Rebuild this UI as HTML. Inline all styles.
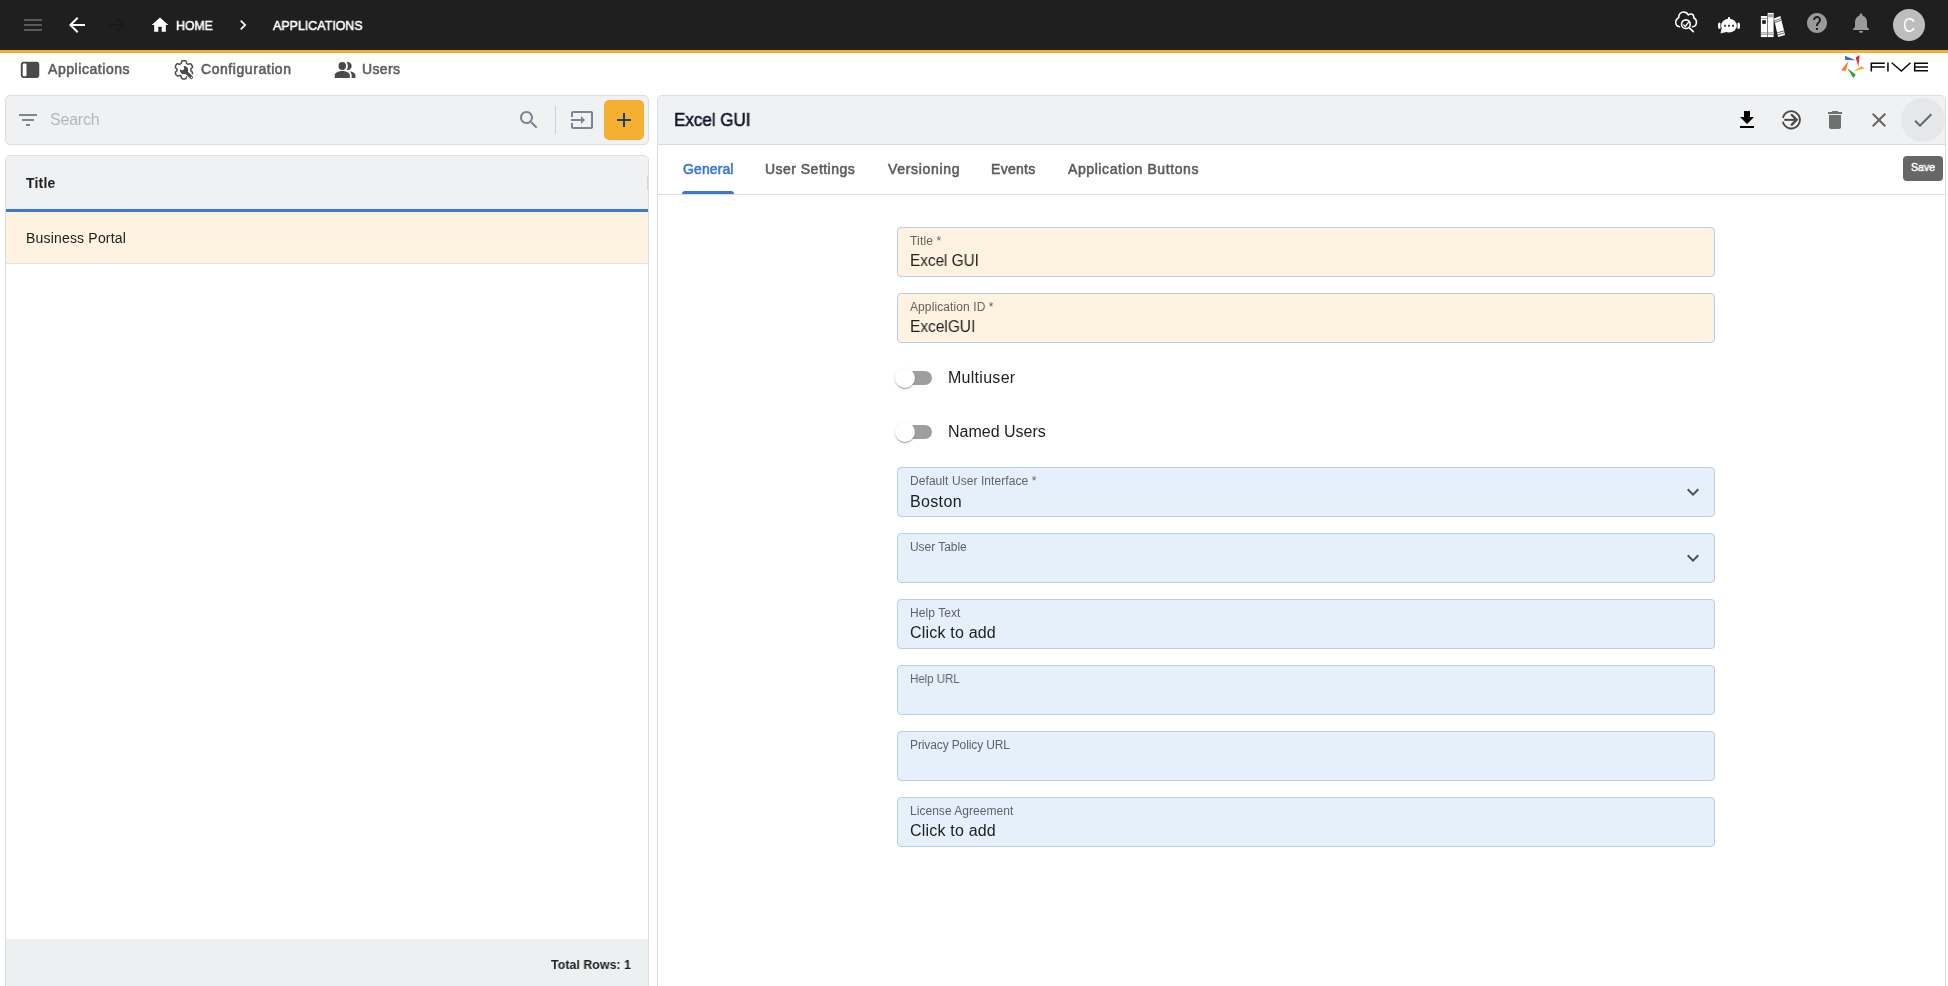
<!DOCTYPE html>
<html>
<head>
<meta charset="utf-8">
<title>Applications</title>
<style>
*{box-sizing:border-box;margin:0;padding:0}
html,body{width:1948px;height:986px;overflow:hidden;background:#fff;font-family:"Liberation Sans",sans-serif;color:#212121}
.abs{position:absolute}
.t{position:absolute;white-space:nowrap;line-height:1;will-change:transform}
#topbar{left:0;top:0;width:1948px;height:50px;background:#1f1f1f}
#orange{left:0;top:50px;width:1948px;height:3px;background:#f5ae31}
#search{left:5px;top:95px;width:644px;height:50px;background:#f0f1f3;border:1px solid #dcdddf;border-radius:5px}
#list{left:5px;top:155px;width:644px;height:840px;background:#fff;border:1px solid #dcdddf;border-radius:5px;overflow:hidden}
#lhead{left:0;top:0;width:642px;height:54px;background:#f0f1f3}
#lblue{left:0;top:53px;width:642px;height:3px;background:#3b78cf}
#lrow{left:0;top:56px;width:642px;height:52px;background:#fef3e1;border-bottom:1px solid #e3e3e3}
#lfoot{left:0;top:783px;width:642px;height:60px;background:#ecf0f1}
#right{left:657px;top:95px;width:1289px;height:900px;background:#fff;border:1px solid #dcdddf;border-radius:5px;overflow:hidden}
#rhead{left:0;top:0;width:1287px;height:49px;background:#f0f1f3;border-bottom:1px solid #d9dadc}
#tabline{left:0;top:98px;width:1287px;height:1px;background:#dcdddf}
.fld{position:absolute;left:897px;width:818px;height:50px;border:1px solid #b8cde6;border-radius:4px;background:#e6f0fb}
.fld.req{background:#fef3e1}
.sw{position:absolute;width:34px;height:14px}
.sw .tr{position:absolute;left:0;top:0;width:34px;height:14px;border-radius:7px;background:#9e9e9e}
.sw .th{position:absolute;left:-3px;top:-3px;width:20px;height:20px;border-radius:50%;background:#fff;box-shadow:0 2px 1px -1px rgba(0,0,0,.2),0 1px 1px 0 rgba(0,0,0,.14),0 1px 3px 0 rgba(0,0,0,.12)}
svg{position:absolute;overflow:visible}
</style>
</head>
<body>
<div class="abs" id="topbar"></div>
<div class="abs" id="orange"></div>

<!-- top bar left -->
<svg style="left:21px;top:13px" width="24" height="24" viewBox="0 0 24 24"><path fill="#5a5a5a" d="M3 18h18v-2H3v2zm0-5h18v-2H3v2zm0-7v2h18V6H3z"/></svg>
<svg style="left:65px;top:13px" width="24" height="24" viewBox="0 0 24 24"><path fill="#fff" d="M20 11H7.83l5.59-5.59L12 4l-8 8 8 8 1.41-1.41L7.83 13H20v-2z"/></svg>
<svg style="left:105px;top:13px" width="24" height="24" viewBox="0 0 24 24"><path fill="#191919" d="M12 4l-1.41 1.41L16.17 11H4v2h12.17l-5.58 5.59L12 20l8-8z"/></svg>
<svg style="left:150.3px;top:15.3px" width="20" height="20" viewBox="0 0 24 24"><path fill="#fff" d="M10 20v-6h4v6h5v-8h3L12 3 2 12h3v8z"/></svg>
<div class="t" id="home" style="left:175.66px;top:19.00px;font-size:13px;color:#fff;transform:scaleX(0.9445);transform-origin:0 0;-webkit-text-stroke:0.55px #fff">HOME</div>
<svg style="left:233px;top:15px" width="20" height="20" viewBox="0 0 24 24"><path fill="#fff" d="M10 6L8.59 7.41 13.17 12l-4.58 4.59L10 18l6-6z"/></svg>
<div class="t" id="appsc" style="left:273.20px;top:19.00px;font-size:13px;color:#fff;transform:scaleX(0.9574);transform-origin:0 0;-webkit-text-stroke:0.55px #fff">APPLICATIONS</div>

<!-- top bar right -->
<svg style="left:1805px;top:11px" width="24" height="24" viewBox="0 0 24 24"><path fill="#9a9a9a" d="M12 2C6.48 2 2 6.48 2 12s4.48 10 10 10 10-4.48 10-10S17.52 2 12 2zm1 17h-2v-2h2v2zm2.070-7.750l-.9.920C13.450 12.900 13 13.500 13 15h-2v-.5c0-1.100.450-2.100 1.170-2.830l1.240-1.260c.370-.360.590-.860.590-1.410 0-1.100-.9-2-2-2s-2 .9-2 2H8c0-2.210 1.790-4 4-4s4 1.790 4 4c0 .880-.360 1.680-.930 2.250z"/></svg>
<svg style="left:1849px;top:10.5px" width="24" height="24" viewBox="0 0 24 24"><path fill="#9a9a9a" d="M12 22c1.100 0 2-.9 2-2h-4c0 1.100.890 2 2 2zm6-6v-5c0-3.070-1.640-5.640-4.500-6.320V4c0-.830-.670-1.500-1.500-1.500s-1.500.670-1.500 1.500v.680C7.630 5.360 6 7.920 6 11v5l-2 2v1h16v-1l-2-2z"/></svg>
<div class="abs" style="left:1893px;top:9px;width:32px;height:32px;border-radius:50%;background:#bdbdbd"></div>
<div class="t" id="avc" style="left:1902.76px;top:15.00px;font-size:20px;color:#fff;transform:scaleX(0.8385);transform-origin:0 0">C</div>

<!-- menu row -->
<div class="t" id="mapp" style="left:47.50px;top:62.00px;font-size:14px;color:#5c5c5c;letter-spacing:0.556px;-webkit-text-stroke:0.55px #5c5c5c">Applications</div>
<div class="t" id="mconf" style="left:201.30px;top:62.00px;font-size:14px;color:#5c5c5c;letter-spacing:0.559px;-webkit-text-stroke:0.55px #5c5c5c">Configuration</div>
<div class="t" id="musers" style="left:361.70px;top:62.00px;font-size:14px;color:#5c5c5c;letter-spacing:0.360px;-webkit-text-stroke:0.55px #5c5c5c">Users</div>

<!-- search -->
<div class="abs" id="search"></div>
<svg style="left:16px;top:108px" width="24" height="24" viewBox="0 0 24 24"><path fill="#7b8690" d="M10 18h4v-2h-4v2zM3 6v2h18V6H3zm3 7h12v-2H6v2z"/></svg>
<div class="t" id="srch" style="left:49.80px;top:112.00px;font-size:16px;color:#b4b7bb;letter-spacing:-0.219px">Search</div>
<svg style="left:517px;top:108px" width="24" height="24" viewBox="0 0 24 24"><path fill="#7b8690" d="M15.500 14h-.790l-.280-.270C15.410 12.590 16 11.110 16 9.500 16 5.910 13.090 3 9.500 3S3 5.910 3 9.500 5.910 16 9.500 16c1.610 0 3.090-.590 4.230-1.570l.270.280v.790l5 4.990L20.490 19l-4.990-5zm-6 0C7.010 14 5 11.990 5 9.500S7.010 5 9.500 5 14 7.010 14 9.500 11.990 14 9.500 14z"/></svg>
<div class="abs" style="left:555px;top:106px;width:1px;height:28px;background:#cdd0d4"></div>
<svg style="left:570px;top:108px" width="24" height="24" viewBox="0 0 24 24"><path fill="#7b8690" d="M21 3.010H3c-1.100 0-2 .9-2 2V9h2V4.990h18v14.030H3V15H1v4.010c0 1.100.9 1.980 2 1.980h18c1.100 0 2-.880 2-1.980v-14c0-1.110-.9-2-2-2zM11 16l4-4-4-4v3H1v2h10v3z"/></svg>
<div class="abs" style="left:604px;top:100px;width:40px;height:40px;background:#f5b031;border-radius:5px"></div>
<svg style="left:612px;top:108px" width="24" height="24" viewBox="0 0 24 24"><path fill="#2e3b4e" d="M19 13h-6v6h-2v-6H5v-2h6V5h2v6h6v2z"/></svg>

<!-- list -->
<div class="abs" id="list">
  <div class="abs" id="lhead"></div>
  <div class="abs" id="lblue"></div>
  <div class="abs" id="lrow"></div>
  <div class="abs" id="lfoot"></div>
</div>
<div class="abs" style="left:646.5px;top:176px;width:1.5px;height:14px;background:#d4d5d7"></div>
<div class="t" id="title" style="left:26.20px;top:176.00px;font-size:14px;color:#212121;letter-spacing:0.215px;font-weight:bold">Title</div>
<div class="t" id="bp" style="left:26.25px;top:231.00px;font-size:14px;color:#212121;letter-spacing:0.185px">Business Portal</div>
<div class="t" id="total" style="left:551.10px;top:958.00px;font-size:13px;color:#212121;transform:scaleX(0.9579);transform-origin:0 0;font-weight:bold">Total Rows: 1</div>

<!-- right -->
<div class="abs" id="right">
  <div class="abs" id="rhead"></div>
  <div class="abs" id="tabline"></div>
  <div class="abs" style="left:24px;top:95px;width:52px;height:3px;background:#3b78cf;border-radius:3px 3px 0 0"></div>
</div>
<div class="t" id="xg" style="left:673.76px;top:111.00px;font-size:18px;color:#10172a;transform:scaleX(0.9441);transform-origin:0 0;-webkit-text-stroke:0.55px #10172a">Excel GUI</div>
<div class="t" id="tab1" style="left:682.80px;top:162.00px;font-size:14px;color:#3b78cf;letter-spacing:0.101px;-webkit-text-stroke:0.55px #3b78cf">General</div>
<div class="t" id="tab2" style="left:764.80px;top:162.00px;font-size:14px;color:#5c5c5c;letter-spacing:0.472px;-webkit-text-stroke:0.55px #5c5c5c">User Settings</div>
<div class="t" id="tab3" style="left:888.40px;top:162.00px;font-size:14px;color:#5c5c5c;letter-spacing:0.690px;-webkit-text-stroke:0.55px #5c5c5c">Versioning</div>
<div class="t" id="tab4" style="left:991.10px;top:162.00px;font-size:14px;color:#5c5c5c;letter-spacing:0.300px;-webkit-text-stroke:0.55px #5c5c5c">Events</div>
<div class="t" id="tab5" style="left:1068.30px;top:162.00px;font-size:14px;color:#5c5c5c;letter-spacing:0.586px;-webkit-text-stroke:0.55px #5c5c5c">Application Buttons</div>

<!-- right header icons -->
<svg style="left:1735px;top:108px" width="24" height="24" viewBox="0 0 24 24"><path fill="#000" d="M19 9h-4V3H9v6H5l7 7 7-7zM5 18v2h14v-2H5z"/></svg>
<svg style="left:1823px;top:108px" width="24" height="24" viewBox="0 0 24 24"><path fill="#6f7171" d="M6 19c0 1.100.9 2 2 2h8c1.100 0 2-.9 2-2V7H6v12zM19 4h-3.500l-1-1h-5l-1 1H5v2h14V4z"/></svg>
<svg style="left:1867px;top:108px" width="24" height="24" viewBox="0 0 24 24"><path fill="#666" d="M19 6.410L17.590 5 12 10.590 6.410 5 5 6.410 10.590 12 5 17.590 6.410 19 12 13.410 17.590 19 19 17.590 13.410 12z"/></svg>
<div class="abs" style="left:1901px;top:98px;width:44px;height:44px;border-radius:50%;background:#e6e7e9"></div>
<svg style="left:1911px;top:108px" width="24" height="24" viewBox="0 0 24 24"><path fill="#666" d="M9 16.170L4.830 12l-1.420 1.410L9 19 21 7l-1.410-1.410z"/></svg>
<div class="abs" style="left:1903px;top:156px;width:40px;height:25px;border-radius:4px;background:#676767"></div>
<div class="t" id="save" style="left:1911.10px;top:162.00px;font-size:11px;color:#fff;transform:scaleX(0.9617);transform-origin:0 0;-webkit-text-stroke:0.5px #fff">Save</div>

<!-- fields -->
<div class="fld req" style="top:227px"></div>
<div class="fld req" style="top:293px"></div>
<div class="sw" style="left:898px;top:371px"><div class="tr"></div><div class="th"></div></div>
<div class="sw" style="left:898px;top:425px"><div class="tr"></div><div class="th"></div></div>
<div class="fld" style="top:467px"></div>
<div class="fld" style="top:533px"></div>
<div class="fld" style="top:599px"></div>
<div class="fld" style="top:665px"></div>
<div class="fld" style="top:731px"></div>
<div class="fld" style="top:797px"></div>
<svg style="left:1681px;top:480px" width="24" height="24" viewBox="0 0 24 24"><path fill="#505050" d="M16.590 8.590L12 13.170 7.410 8.590 6 10l6 6 6-6z"/></svg>
<svg style="left:1681px;top:546px" width="24" height="24" viewBox="0 0 24 24"><path fill="#505050" d="M16.590 8.590L12 13.170 7.410 8.590 6 10l6 6 6-6z"/></svg>
<div class="t" id="l1" style="left:909.65px;top:235.00px;font-size:12px;color:#67625b;letter-spacing:0.165px">Title *</div><div class="t" id="v1" style="left:909.65px;top:253.00px;font-size:16px;color:#212121;transform:scaleX(0.9572);transform-origin:0 0">Excel GUI</div>
<div class="t" id="l2" style="left:909.65px;top:301.00px;font-size:12px;color:#67625b;letter-spacing:0.098px">Application ID *</div><div class="t" id="v2" style="left:909.65px;top:319.00px;font-size:16px;color:#212121;transform:scaleX(0.9656);transform-origin:0 0">ExcelGUI</div>
<div class="t" id="mu" style="left:947.50px;top:370.00px;font-size:16px;color:#212121;letter-spacing:0.278px">Multiuser</div>
<div class="t" id="nu" style="left:947.50px;top:424.00px;font-size:16px;color:#212121;letter-spacing:-0.010px">Named Users</div>
<div class="t" id="l3" style="left:909.65px;top:475.00px;font-size:12px;color:#5f6368;letter-spacing:0.069px">Default User Interface *</div><div class="t" id="v3" style="left:909.65px;top:494.00px;font-size:16px;color:#212121;letter-spacing:0.347px">Boston</div>
<div class="t" id="l4" style="left:909.65px;top:541.00px;font-size:12px;color:#5f6368;letter-spacing:-0.048px">User Table</div>
<div class="t" id="l5" style="left:909.65px;top:607.00px;font-size:12px;color:#5f6368;letter-spacing:0.070px">Help Text</div><div class="t" id="v5" style="left:909.65px;top:625.00px;font-size:16px;color:#212121;letter-spacing:0.196px">Click to add</div>
<div class="t" id="l6" style="left:909.65px;top:673.00px;font-size:12px;color:#5f6368;transform:scaleX(0.9542);transform-origin:0 0">Help URL</div>
<div class="t" id="l7" style="left:909.65px;top:739.00px;font-size:12px;color:#5f6368;letter-spacing:-0.118px">Privacy Policy URL</div>
<div class="t" id="l8" style="left:909.65px;top:805.00px;font-size:12px;color:#5f6368;letter-spacing:0.037px">License Agreement</div><div class="t" id="v8" style="left:909.65px;top:823.00px;font-size:16px;color:#212121;letter-spacing:0.196px">Click to add</div>

<!-- custom icons overlay -->
<svg style="left:0;top:0" width="1948" height="986" viewBox="0 0 1948 986">
  <!-- applications icon -->
  <rect x="20.8" y="61.7" width="18.5" height="16.4" rx="3" fill="#4a4a4a"/>
  <rect x="22.7" y="63.6" width="3.8" height="12.6" rx="1.2" fill="#fff"/>
  <!-- gear + wrench -->
  <path d="M192.22 73.73 L192.32 73.47 L192.40 73.20 L192.44 72.92 L192.43 72.62 L192.32 72.31 L192.11 71.97 L191.79 71.64 L191.46 71.32 L191.17 71.03 L190.98 70.78 L190.86 70.55 L190.80 70.33 L190.76 70.12 L190.75 69.91 L190.75 69.70 L190.77 69.49 L190.82 69.28 L190.90 69.05 L191.05 68.81 L191.28 68.55 L191.60 68.25 L191.94 67.92 L192.21 67.58 L192.38 67.26 L192.44 66.95 L192.43 66.66 L192.37 66.38 L192.28 66.12 L192.18 65.86 L192.06 65.60 L191.93 65.35 L191.79 65.11 L191.63 64.88 L191.47 64.65 L191.30 64.43 L191.11 64.22 L190.89 64.03 L190.64 63.88 L190.34 63.79 L189.96 63.79 L189.52 63.87 L189.07 64.00 L188.67 64.12 L188.33 64.18 L188.06 64.18 L187.83 64.14 L187.62 64.07 L187.43 63.98 L187.25 63.87 L187.07 63.75 L186.91 63.62 L186.75 63.44 L186.61 63.22 L186.50 62.91 L186.39 62.51 L186.28 62.05 L186.14 61.62 L185.96 61.29 L185.73 61.05 L185.48 60.90 L185.21 60.80 L184.94 60.74 L184.66 60.69 L184.38 60.67 L184.10 60.65 L183.82 60.65 L183.54 60.66 L183.26 60.68 L182.98 60.72 L182.70 60.77 L182.43 60.85 L182.18 60.98 L181.94 61.17 L181.73 61.47 L181.57 61.86 L181.45 62.32 L181.35 62.75 L181.24 63.10 L181.11 63.35 L180.96 63.55 L180.80 63.70 L180.63 63.82 L180.45 63.93 L180.26 64.03 L180.06 64.11 L179.85 64.17 L179.59 64.19 L179.29 64.15 L178.91 64.06 L178.47 63.93 L178.02 63.81 L177.61 63.78 L177.28 63.84 L177.01 63.96 L176.78 64.14 L176.58 64.33 L176.40 64.55 L176.23 64.78 L176.08 65.01 L175.93 65.25 L175.80 65.50 L175.67 65.75 L175.56 66.01 L175.46 66.27 L175.39 66.54 L175.36 66.82 L175.38 67.12 L175.50 67.44 L175.73 67.78 L176.05 68.11 L176.39 68.42 L176.66 68.70 L176.84 68.95 L176.95 69.18 L177.01 69.40 L177.04 69.61 L177.05 69.82 L177.04 70.03 L177.02 70.24 L176.97 70.46 L176.88 70.68 L176.72 70.92 L176.47 71.19 L176.15 71.50 L175.82 71.83 L175.55 72.16 L175.40 72.49 L175.36 72.79 L175.38 73.08 L175.44 73.35 L175.53 73.62 L175.64 73.88 L175.76 74.13 L175.89 74.38 L176.04 74.62 L176.19 74.86 L176.35 75.09 L176.53 75.31 L176.72 75.51 L176.94 75.69 L177.20 75.83 L177.51 75.91 L177.90 75.91 L178.34 75.81 L178.79 75.68 L179.19 75.57 L179.51 75.52 L179.78 75.52 L180.00 75.57 L180.21 75.65 L180.40 75.74 L180.58 75.84 L180.75 75.96 L180.92 76.11 L181.07 76.28 L181.20 76.52 L181.32 76.84 L181.42 77.25 L181.53 77.71 L181.68 78.13 L181.87 78.45 L182.10 78.67 L182.36 78.82 L182.63 78.91 L182.90 78.97 L183.18 79.01 L183.46 79.04 L183.74 79.05 L184.02 79.05 L184.30 79.04 L184.58 79.01 L184.86 78.98 L185.13 78.92 L185.40 78.83 L185.66 78.70 L185.89 78.49 L186.09 78.18 L186.25 77.78 L186.36 77.32 L186.46 76.90" fill="none" stroke="#4a4a4a" stroke-width="1.5" stroke-linecap="round" stroke-linejoin="round"/>
  <line x1="185.5" y1="71.6" x2="191.3" y2="77.4" stroke="#4a4a4a" stroke-width="3.3" stroke-linecap="round"/>
  <circle cx="184.0" cy="70.1" r="4.2" fill="#4a4a4a"/>
  <circle cx="182.0" cy="68.0" r="2.25" fill="#fff"/>
  <circle cx="191.4" cy="77.5" r="0.65" fill="#fff"/>
  <!-- users icon (PeopleAlt) -->
  <g transform="translate(333.8,58) scale(0.94,1)" fill="#4a4a4a">
    <path d="M16.67 13.13C18.04 14.06 19 15.32 19 17v3h4v-3c0-2.18-3.57-3.47-6.33-3.87z"/>
    <circle cx="9" cy="8" r="4"/>
    <path d="M15 12c2.21 0 4-1.79 4-4s-1.79-4-4-4c-.47 0-.91.1-1.33.24C14.500 5.270 15 6.580 15 8s-.5 2.730-1.330 3.760c.420.140.860.240 1.330.240z"/>
    <path d="M9 13c-2.670 0-8 1.340-8 4v3h16v-3c0-2.660-5.330-4-8-4z"/>
  </g>
  <!-- cloud search-check -->
  <g transform="translate(1670,6)" fill="none" stroke="#fff" stroke-width="1.6" stroke-linecap="round" stroke-linejoin="round">
    <path d="M9.7 20.8 C7.2 20.6 5.7 18.6 5.7 16.3 C5.7 14.2 6.8 12.6 8.7 11.6 C8.7 8.5 10.8 6.0 13.7 6.0 C15.8 6.0 17.4 7.1 18.3 9.0 C19.0 8.3 19.9 7.95 20.9 7.95 C22.8 7.95 24.0 9.6 23.8 12.0 C25.6 12.8 26.45 14.4 26.45 16.2 C26.45 18.6 24.8 20.5 22.4 20.8"/>
    <circle cx="15.9" cy="18.2" r="6.0" fill="#1f1f1f" stroke="none"/>
    <circle cx="15.9" cy="18.2" r="4.35" fill="#1f1f1f"/>
    <path d="M13.7 18.9 L15.3 20.5 L18.6 16.2" stroke-width="1.3"/>
    <path d="M19.3 21.9 L23.3 25.6" stroke-width="1.7"/>
  </g>
  <!-- chat bot -->
  <g transform="translate(1713,10)">
    <ellipse cx="6.45" cy="15.75" rx="1.45" ry="3.3" fill="#fff"/>
    <ellipse cx="25.55" cy="15.75" rx="1.45" ry="3.3" fill="#fff"/>
    <ellipse cx="15.97" cy="15.64" rx="8.6" ry="7.6" fill="#1f1f1f"/>
    <rect x="14.9" y="6.95" width="2.15" height="3.7" rx="1" fill="#fff"/>
    <path d="M8.9 18.5 L7.9 23.1 L13 21.8 Z" fill="#fff" stroke="#fff" stroke-width="0.6" stroke-linejoin="round"/>
    <ellipse cx="15.97" cy="15.64" rx="7.87" ry="6.9" fill="#fff"/>
    <rect x="11.05" y="14.85" width="1.8" height="1.8" rx="0.3" fill="#1f1f1f"/>
    <rect x="15.07" y="14.85" width="1.8" height="1.8" rx="0.3" fill="#1f1f1f"/>
    <rect x="19.15" y="14.85" width="1.8" height="1.8" rx="0.3" fill="#1f1f1f"/>
  </g>
  <!-- books -->
  <g transform="translate(1757,9)">
    <rect x="3.9" y="7" width="6.4" height="21.1" fill="#fff"/>
    <rect x="3.9" y="9.1" width="6.4" height="0.6" fill="#666"/>
    <rect x="5.2" y="11.2" width="3.6" height="3.6" fill="#1a1a1a"/>
    <rect x="3.9" y="23.1" width="6.4" height="0.6" fill="#777"/>
    <rect x="3.9" y="23.7" width="6.4" height="1.5" fill="#d4d4d4"/>
    <rect x="3.9" y="25.2" width="6.4" height="0.6" fill="#777"/>
    <rect x="10.3" y="3.9" width="0.7" height="24.2" fill="#8a8a8a"/>
    <rect x="11" y="3.9" width="5.6" height="24.2" fill="#fff"/>
    <rect x="11.2" y="5.2" width="5.1" height="3.2" fill="#a8a8a8"/>
    <rect x="11" y="23.1" width="5.6" height="0.6" fill="#777"/>
    <rect x="11" y="23.7" width="5.6" height="1.5" fill="#d4d4d4"/>
    <rect x="11" y="25.2" width="5.6" height="0.6" fill="#777"/>
    <path d="M16.9 9.4 L23.4 7 L28.1 26 L21.1 28.1 Z" fill="#fff"/>
    <path d="M17.5 11.8 L24 9.5 M18 13.5 L24.4 11.2 M20.1 23.8 L27.1 21.9 M20.6 25.9 L27.6 23.9" stroke="#2a2a2a" stroke-width="0.7" fill="none"/>
  </g>
  <!-- circle arrow -->
  <g transform="translate(1775,104)" fill="none" stroke="#484848" stroke-linecap="butt">
    <path d="M8.12 13.18 A8.6 8.6 0 1 1 8.12 18.5" stroke-width="1.85" stroke-linecap="round"/>
    <path d="M9.25 15.84 H20.4" stroke-width="2.0"/>
    <path d="M16.1 10.3 L21.65 15.84 L16.1 21.4" stroke-width="2.3" stroke-linejoin="miter"/>
  </g>
  <!-- FIVE logo -->
  <g>
    <path d="M1844.8 55.8 L1845.2 60.1 L1855.6 60.2 Z" fill="#2f6fd6"/>
    <path d="M1859.7 55.1 L1855.7 57.6 L1858.3 66.4 Z" fill="#d62a2f"/>
    <path d="M1861.5 65.9 L1864.8 68.5 L1853.3 71.5 Z" fill="#f5b02c"/>
    <path d="M1847 67.9 L1855.7 74.5 L1853.5 78.3 Z" fill="#36a043"/>
    <path d="M1848.5 61 L1841.2 70.3 L1845.7 70.9 Z" fill="#f77b2d"/>
    <g fill="none" stroke="#0a0a0a" stroke-width="1.55">
      <path d="M1871.3 71.5 V63.15 H1884.8 M1871.3 66.95 H1884.8"/>
      <path d="M1887.95 62.4 V71.5"/>
      <path d="M1891.7 62.7 L1901.4 71.0 L1910.5 62.7" stroke-width="1.5"/>
      <path d="M1928 63.15 H1914.7 V70.75 H1928 M1914.7 66.95 H1928"/>
    </g>
  </g>
</svg>

</body>
</html>
